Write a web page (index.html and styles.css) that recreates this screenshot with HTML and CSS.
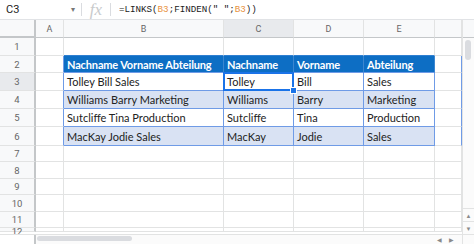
FILE: index.html
```html
<!DOCTYPE html>
<html>
<head>
<meta charset="utf-8">
<link rel="stylesheet" href="styles.css">
</head>
<body>
<div class="app">
  <div class="fbar">
    <div class="namebox"><span class="ref">C3</span><span class="caret">&#9662;</span></div>
    <div class="sep"></div>
    <div class="fx">fx</div>
    <div class="sep"></div>
    <div class="formula">=LINKS(<span class="r">B3</span>;FINDEN(" ";<span class="r">B3</span>))</div>
  </div>
  <div class="body">
    <div class="sheet">
      <div class="grid">
        <div class="corner"></div><div class="ch">A</div><div class="ch">B</div><div class="ch sel">C</div><div class="ch">D</div><div class="ch">E</div><div class="ch"></div>

        <div class="rh">1</div><div class="c"></div><div class="c tt"></div><div class="c tt"></div><div class="c tt"></div><div class="c tt"></div><div class="c"></div>

        <div class="rh">2</div><div class="c pre"></div><div class="c th">Nachname Vorname Abteilung</div><div class="c th">Nachname</div><div class="c th">Vorname</div><div class="c th">Abteilung</div><div class="c pre"></div>

        <div class="rh sel">3</div><div class="c pre"></div><div class="c td">Tolley Bill Sales</div><div class="c td active">Tolley</div><div class="c td">Bill</div><div class="c td">Sales</div><div class="c pre"></div>

        <div class="rh">4</div><div class="c pre"></div><div class="c td alt">Williams Barry Marketing</div><div class="c td alt">Williams</div><div class="c td alt">Barry</div><div class="c td alt">Marketing</div><div class="c pre"></div>

        <div class="rh">5</div><div class="c pre"></div><div class="c td">Sutcliffe Tina Production</div><div class="c td">Sutcliffe</div><div class="c td">Tina</div><div class="c td">Production</div><div class="c pre"></div>

        <div class="rh">6</div><div class="c pre"></div><div class="c td alt">MacKay Jodie Sales</div><div class="c td alt">MacKay</div><div class="c td alt">Jodie</div><div class="c td alt">Sales</div><div class="c pre"></div>

        <div class="rh">7</div><div class="c"></div><div class="c"></div><div class="c"></div><div class="c"></div><div class="c"></div><div class="c"></div>
        <div class="rh">8</div><div class="c"></div><div class="c"></div><div class="c"></div><div class="c"></div><div class="c"></div><div class="c"></div>
        <div class="rh">9</div><div class="c"></div><div class="c"></div><div class="c"></div><div class="c"></div><div class="c"></div><div class="c"></div>
        <div class="rh">10</div><div class="c"></div><div class="c"></div><div class="c"></div><div class="c"></div><div class="c"></div><div class="c"></div>
        <div class="rh">11</div><div class="c"></div><div class="c"></div><div class="c"></div><div class="c"></div><div class="c"></div><div class="c"></div>
        <div class="rh cut">12</div><div class="c"></div><div class="c"></div><div class="c"></div><div class="c"></div><div class="c"></div><div class="c"></div>
      </div>
      <div class="hscroll">
        <div class="hs-left"></div>
        <div class="hs-track"><div class="hs-thumb"></div></div>
        <div class="hs-btns"><span>&#9664;</span><span>&#9654;</span></div>
      </div>
    </div>
    <div class="vscroll">
      <div class="vs-head"></div>
      <div class="vs-track"><div class="vs-thumb"></div></div>
      <div class="vs-btn">&#9650;</div>
      <div class="vs-btn">&#9660;</div>
      <div class="vs-foot"></div>
    </div>
  </div>
</div>
</body>
</html>
```

FILE: styles.css
```css
html, body {
  margin: 0;
  padding: 0;
  background: #fff;
}
.app {
  width: 474px;
  height: 244px;
  overflow: hidden;
  font-family: Roboto, "Liberation Sans", sans-serif;
}
.fbar {
  height: 20px;
  display: flex;
  align-items: center;
  border-bottom: 1px solid #e1e3e6;
  box-sizing: border-box;
}
.namebox {
  width: 81px;
  display: flex;
  align-items: center;
  justify-content: space-between;
  padding: 0 6px 0 6px;
  box-sizing: border-box;
}
.ref {
  font-size: 11px;
  color: #222;
}
.caret {
  font-size: 8px;
  color: #777;
}
.sep {
  width: 1px;
  height: 13px;
  background: #dadce0;
}
.fx {
  width: 28px;
  text-align: center;
  font-family: "Liberation Serif", serif;
  font-style: italic;
  font-size: 17px;
  line-height: 18px;
  color: #c8cacc;
}
.formula {
  padding-left: 8px;
  font-family: "Liberation Mono", monospace;
  font-size: 9.2px;
  color: #222;
  white-space: pre;
}
.formula .r {
  color: #e8913d;
}
.body {
  display: flex;
  height: 224px;
}
.sheet {
  width: 462px;
  display: flex;
  flex-direction: column;
}
.grid {
  display: grid;
  grid-template-columns: 36px 28px 160px 70px 70px 71px 27px;
  grid-template-rows: 18px 18px 17px 18px 18px 18px 19px 16px 17px 16px 17px 16px 4px;
  overflow: hidden;
  height: 214px;
}
.grid > div {
  box-sizing: border-box;
  border-right: 1px solid #e2e3e3;
  border-bottom: 1px solid #e2e3e3;
}
.corner {
  background: #f8f9fa;
  border-right: 2px solid #c4c7c9 !important;
  border-bottom: 2px solid #c4c7c9 !important;
}
.ch {
  background: #f8f9fa;
  color: #666;
  font-size: 9px;
  display: flex;
  align-items: center;
  justify-content: center;
  border-bottom-color: #c4c7c9 !important;
}
.ch.sel, .rh.sel {
  background: #e8eaed;
}
.rh {
  background: #f8f9fa;
  color: #666;
  font-size: 9.5px;
  display: flex;
  align-items: center;
  justify-content: center;
  border-right: 2px solid #c4c7c9 !important;
}
.rh.cut {
  align-items: flex-start;
  line-height: 8px;
}
.c {
  font-family: Lato, "Open Sans", sans-serif;
  font-size: 11px;
  color: #222;
  display: flex;
  align-items: center;
  padding-left: 3px;
  white-space: nowrap;
  overflow: hidden;
}
.c.tt {
  border-bottom-color: #2f7fd1 !important;
}
.c.pre {
  border-right-color: #6f9be6 !important;
}
.c.th {
  background: #0d6ec4;
  color: #fff;
  font-weight: 700;
  letter-spacing: -0.15px;
  border-right-color: #3c86d0 !important;
  border-bottom-color: #6f9be6 !important;
}
.c.td {
  border-right-color: #6f9be6 !important;
  border-bottom-color: #6f9be6 !important;
}
.c.alt {
  background: #d9e2f3;
}
.c.active {
  position: relative;
  overflow: visible;
}
.c.active::after {
  content: "";
  position: absolute;
  left: -1px;
  top: -1px;
  right: -1px;
  bottom: -1px;
  border: 2px solid #1a73e8;
}
.c.active::before {
  content: "";
  position: absolute;
  right: -4px;
  bottom: -4px;
  width: 5px;
  height: 5px;
  background: #1a73e8;
  border: 1px solid #fff;
  z-index: 2;
}
.hscroll {
  height: 10px;
  display: flex;
  border-top: 1px solid #e2e3e3;
  box-sizing: border-box;
}
.hs-left {
  width: 36px;
  border-right: 2px solid #c4c7c9;
  box-sizing: border-box;
  background: #fff;
}
.hs-track {
  flex: 1;
  position: relative;
  background: #fbfbfb;
}
.hs-thumb {
  position: absolute;
  left: 1px;
  top: 1px;
  width: 95px;
  height: 5px;
  border-radius: 3px;
  background: #dadce0;
}
.hs-btns {
  width: 28px;
  display: flex;
  gap: 7px;
  padding-left: 3px;
  box-sizing: border-box;
  align-items: center;
  font-size: 6px;
  color: #8a8a8a;
  background: #fbfbfb;
}
.vscroll {
  width: 12px;
  display: flex;
  flex-direction: column;
  background: #fbfbfb;
  border-left: 1px solid #e2e3e3;
  box-sizing: border-box;
}
.vs-head {
  height: 18px;
  background: #f8f9fa;
  border-bottom: 1px solid #c4c7c9;
  box-sizing: border-box;
}
.vs-track {
  flex: 1;
  position: relative;
}
.vs-thumb {
  position: absolute;
  left: 2px;
  top: 2px;
  width: 6px;
  height: 20px;
  border-radius: 3px;
  background: #dadce0;
}
.vs-btn {
  height: 13px;
  font-size: 6px;
  color: #8a8a8a;
  display: flex;
  align-items: center;
  justify-content: center;
  border-top: 1px solid #e2e3e3;
  box-sizing: border-box;
}
.vs-foot {
  height: 10px;
  border-top: 1px solid #e2e3e3;
  box-sizing: border-box;
}
```
